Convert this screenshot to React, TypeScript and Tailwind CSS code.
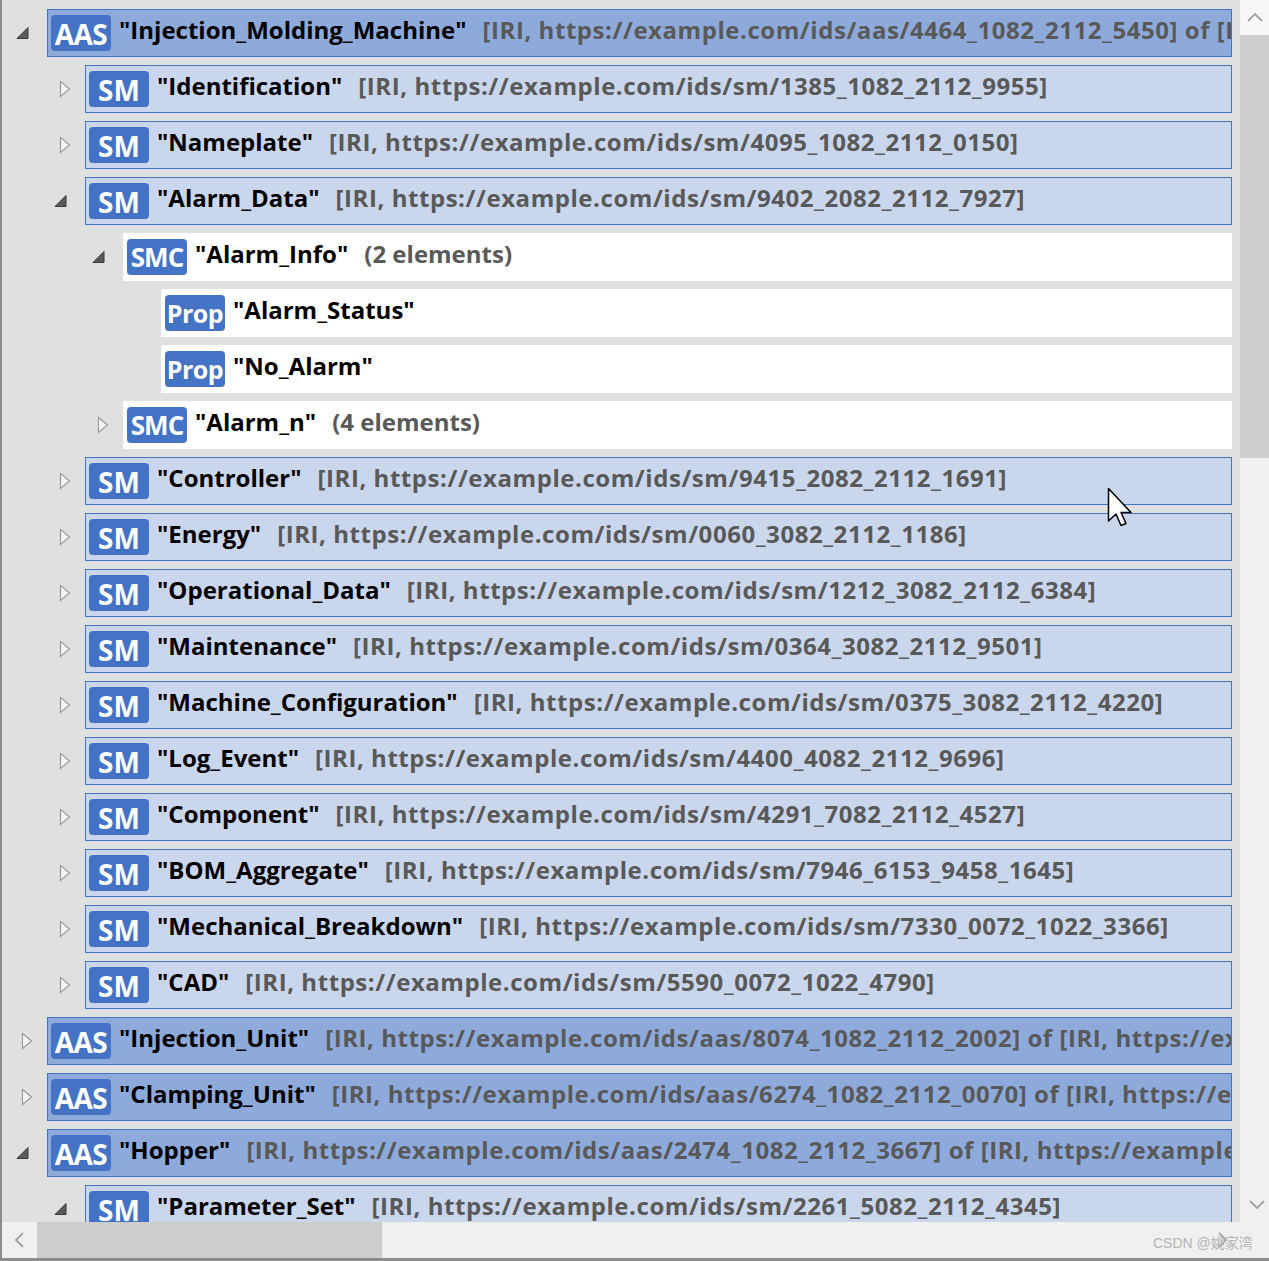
import React from 'react';

type Kind = 'AAS' | 'SM' | 'SMC' | 'Prop';
type State = 'open' | 'closed' | 'leaf';

interface Row {
    level: number;
    kind: Kind;
    state: State;
    name: string;
    info?: string;
}

const sm = (id: string) => `[IRI, https://example.com/ids/sm/${id}]`;

const rows: Row[] = [
    { level: 0, kind: 'AAS', state: 'open', name: 'Injection_Molding_Machine', info: '[IRI, https://example.com/ids/aas/4464_1082_2112_5450] of [IRI, https://example.com/ids/asset/4464_1082_2112_5450]' },
    { level: 1, kind: 'SM', state: 'closed', name: 'Identification', info: sm('1385_1082_2112_9955') },
    { level: 1, kind: 'SM', state: 'closed', name: 'Nameplate', info: sm('4095_1082_2112_0150') },
    { level: 1, kind: 'SM', state: 'open', name: 'Alarm_Data', info: sm('9402_2082_2112_7927') },
    { level: 2, kind: 'SMC', state: 'open', name: 'Alarm_Info', info: '(2 elements)' },
    { level: 3, kind: 'Prop', state: 'leaf', name: 'Alarm_Status' },
    { level: 3, kind: 'Prop', state: 'leaf', name: 'No_Alarm' },
    { level: 2, kind: 'SMC', state: 'closed', name: 'Alarm_n', info: '(4 elements)' },
    { level: 1, kind: 'SM', state: 'closed', name: 'Controller', info: sm('9415_2082_2112_1691') },
    { level: 1, kind: 'SM', state: 'closed', name: 'Energy', info: sm('0060_3082_2112_1186') },
    { level: 1, kind: 'SM', state: 'closed', name: 'Operational_Data', info: sm('1212_3082_2112_6384') },
    { level: 1, kind: 'SM', state: 'closed', name: 'Maintenance', info: sm('0364_3082_2112_9501') },
    { level: 1, kind: 'SM', state: 'closed', name: 'Machine_Configuration', info: sm('0375_3082_2112_4220') },
    { level: 1, kind: 'SM', state: 'closed', name: 'Log_Event', info: sm('4400_4082_2112_9696') },
    { level: 1, kind: 'SM', state: 'closed', name: 'Component', info: sm('4291_7082_2112_4527') },
    { level: 1, kind: 'SM', state: 'closed', name: 'BOM_Aggregate', info: sm('7946_6153_9458_1645') },
    { level: 1, kind: 'SM', state: 'closed', name: 'Mechanical_Breakdown', info: sm('7330_0072_1022_3366') },
    { level: 1, kind: 'SM', state: 'closed', name: 'CAD', info: sm('5590_0072_1022_4790') },
    { level: 0, kind: 'AAS', state: 'closed', name: 'Injection_Unit', info: '[IRI, https://example.com/ids/aas/8074_1082_2112_2002] of [IRI, https://example.com/ids/asset/8074_1082_2112_2002]' },
    { level: 0, kind: 'AAS', state: 'closed', name: 'Clamping_Unit', info: '[IRI, https://example.com/ids/aas/6274_1082_2112_0070] of [IRI, https://example.com/ids/asset/6274_1082_2112_0070]' },
    { level: 0, kind: 'AAS', state: 'open', name: 'Hopper', info: '[IRI, https://example.com/ids/aas/2474_1082_2112_3667] of [IRI, https://example.com/ids/asset/2474_1082_2112_3667]' },
    { level: 1, kind: 'SM', state: 'open', name: 'Parameter_Set', info: sm('2261_5082_2112_4345') },
];

const indent = ['pl-0', 'pl-[38px]', 'pl-[76px]', 'pl-[114px]'];

const boxStyle: Record<Kind, string> = {
    AAS: 'bg-[#8eaadb] border-[#4472c4]',
    SM: 'bg-[#cad6ec] border-[#4472c4]',
    SMC: 'bg-white border-transparent',
    Prop: 'bg-white border-transparent',
};

const badgeText: Record<Kind, string> = {
    AAS: 'text-[28px] tracking-[-0.5px]',
    SM: 'text-[28px]',
    SMC: 'text-[26px] tracking-[-1px]',
    Prop: 'text-[25px] tracking-[-0.5px]',
};

const Toggle: React.FC<{ state: State }> = ({ state }) => {
    if (state === 'leaf') return <div className="w-[45px] shrink-0" />;
    return (
        <div className="w-[45px] shrink-0 flex items-center">
            <svg width="34" height="20" viewBox="0 0 34 20" className="ml-[10px]">
                {state === 'open' ? (
                    <polygon points="16,4.5 16,15.5 5,15.5" fill="#5a5a5a" stroke="#3a3a3a" strokeWidth="1" />
                ) : (
                    <polygon points="10.5,2.5 19.5,10 10.5,17.5" fill="#f4f4f4" stroke="#9a9a9a" strokeWidth="1.2" />
                )}
            </svg>
        </div>
    );
};

const TreeRow: React.FC<{ row: Row }> = ({ row }) => (
    <div className={`flex h-[48px] shrink-0 ${indent[row.level]}`}>
        <Toggle state={row.state} />
        <div className={`flex-1 min-w-0 flex items-center overflow-hidden whitespace-nowrap border pl-[3px] ${boxStyle[row.kind]}`}>
            <div className={`w-[60px] h-[36px] shrink-0 rounded-[4px] bg-[#4472c4] text-white font-bold flex items-center justify-center pt-[1px] ${badgeText[row.kind]}`}>
                {row.kind}
            </div>
            <span className="ml-[8px] pb-[6px] text-[24px] font-bold text-black">"{row.name}"</span>
            {row.info && (
                <span className={`ml-[16px] pb-[6px] text-[24px] font-bold text-[#595959] ${row.info.startsWith('[') ? 'tracking-[0.55px]' : ''}`}>
                    {row.info}
                </span>
            )}
        </div>
    </div>
);

const Chevron: React.FC<{ dir: 'up' | 'down' | 'left' | 'right' }> = ({ dir }) => {
    const pts = {
        up: '3,11 10,4 17,11',
        down: '3,4 10,11 17,4',
        left: '11,3 4,10 11,17',
        right: '4,3 11,10 4,17',
    }[dir];
    const vertical = dir === 'up' || dir === 'down';
    return (
        <svg width={vertical ? 20 : 15} height={vertical ? 15 : 20} viewBox={vertical ? '0 0 20 15' : '0 0 15 20'}>
            <polyline points={pts} fill="none" stroke="#a3a3a3" strokeWidth="1.8" />
        </svg>
    );
};

const App: React.FC = () => {
    return (
        <div
            className="relative w-[1269px] h-[1261px] overflow-hidden bg-[#e0e0e0] border-l-2 border-b-[3px] border-[#8c8c8c] flex flex-col"
            style={{ fontFamily: '"Open Sans", "Noto Sans", "Noto Sans CJK SC", sans-serif' }}
        >
            <div className="flex h-[1222px] shrink-0">
                <div className="flex-1 overflow-hidden pt-[9px] pr-[8px] flex flex-col gap-[8px]">
                    {rows.map((row, i) => (
                        <TreeRow key={i} row={row} />
                    ))}
                </div>
                <div className="w-[29px] shrink-0 bg-[#f0f0f0] flex flex-col">
                    <div className="h-[35px] bg-[#f7f7f7] flex items-center justify-center">
                        <Chevron dir="up" />
                    </div>
                    <div className="h-[423px] bg-[#cdcdcd]" />
                    <div className="flex-1" />
                    <div className="h-[35px] flex items-center justify-center pl-[4px]">
                        <Chevron dir="down" />
                    </div>
                </div>
            </div>
            <div className="flex flex-1 bg-[#f0f0f0]">
                <div className="w-[35px] flex items-center justify-center">
                    <Chevron dir="left" />
                </div>
                <div className="w-[345px] bg-[#cdcdcd]" />
                <div className="flex-1" />
                <div className="w-[35px] flex items-center justify-center">
                    <Chevron dir="right" />
                </div>
                <div className="w-[29px]" />
            </div>

            <div className="absolute left-[1151px] top-[1233px] text-[14px] text-[#b4b4b4] whitespace-nowrap" style={{ fontFamily: '"Liberation Sans", "Noto Sans CJK SC", sans-serif' }}>
                CSDN @姚家湾
            </div>

            <svg className="absolute left-[1105px] top-[487px]" width="28" height="42" viewBox="0 0 28 42">
                <path d="M1.5 1.5 L1.5 34 L9 27 L14 38.5 L19 36.5 L14 25.5 L24 25.5 Z" fill="#ffffff" stroke="#000000" strokeWidth="1.5" strokeLinejoin="round" />
            </svg>
        </div>
    );
};

export default App;
